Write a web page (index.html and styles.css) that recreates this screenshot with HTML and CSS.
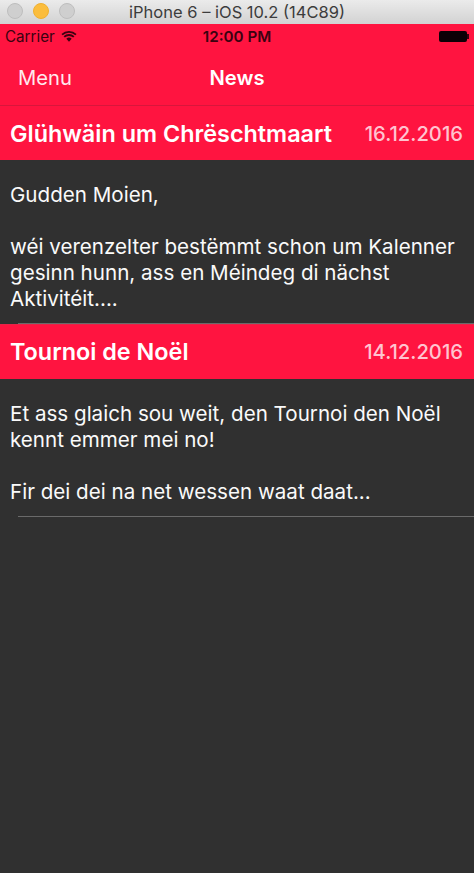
FILE: index.html
```html
<!DOCTYPE html>
<html lang="lb">
<head>
<meta charset="utf-8">
<title>News</title>
<link rel="stylesheet" href="styles.css">
</head>
<body>
<div class="titlebar">
  <div class="lights"><span class="light"></span><span class="light amber"></span><span class="light"></span></div>
  <div class="window-title">iPhone 6 – iOS 10.2 (14C89)</div>
</div>
<header class="appbar">
  <div class="status">
    <div class="carrier">Carrier
      <svg class="wifi" width="16" height="12" viewBox="0 0 15 11"><path d="M7.5 11 5 8a3.6 3.6 0 0 1 5 0z" fill="#3a0210"/><path d="M1 4.2a9.4 9.4 0 0 1 13 0M3 6.4a6.4 6.4 0 0 1 9 0" fill="none" stroke="#3a0210" stroke-width="1.7"/></svg>
    </div>
    <div class="clock">12:00 PM</div>
    <div class="battery"><span class="battery-body"></span><span class="battery-tip"></span></div>
  </div>
  <nav class="nav">
    <span class="menu">Menu</span>
    <span class="nav-title">News</span>
  </nav>
</header>
<main>
  <article class="item">
    <div class="item-head"><h2>Glühwäin um Chrëschtmaart</h2><time>16.12.2016</time></div>
    <p class="body">Gudden Moien,<br><br>wéi verenzelter bestëmmt schon um Kalenner gesinn hunn, ass en Méindeg di nächst Aktivitéit....</p>
  </article>
  <article class="item second">
    <div class="item-head"><h2>Tournoi de Noël</h2><time>14.12.2016</time></div>
    <p class="body">Et ass glaich sou weit, den Tournoi den Noël kennt emmer mei no!<br><br>Fir dei dei na net wessen waat daat...</p>
  </article>
</main>
</body>
</html>
```
FILE: styles.css
```css
* { box-sizing: border-box; }
html, body { margin: 0; height: 100%; }
body { width: 474px; height: 873px; overflow: hidden; background: #303030; font-family: Inter, "Liberation Sans", sans-serif; color: #fff; display: flex; flex-direction: column; }
.titlebar { height: 24px; flex: none; position: relative; display: flex; align-items: center; justify-content: center; background: linear-gradient(#ebebeb, #d2d2d2); color: #3c3c3c; font-size: 16.5px; }
.lights { position: absolute; left: 7px; top: 3px; display: flex; gap: 10px; }
.light { width: 16px; height: 16px; border-radius: 50%; background: #cfcfcf; border: 1px solid #bebebe; }
.light.amber { background: #fbbd3d; border-color: #f0b030; }
.window-title { white-space: nowrap; }
.appbar { height: 82px; flex: none; background: #ff1440; border-bottom: 1px solid #d8163c; }
.status { height: 24px; padding: 0 5px 0 5px; display: grid; grid-template-columns: 1fr auto 1fr; align-items: center; color: #3a0210; font-size: 15.2px; }
.carrier { display: flex; align-items: center; gap: 6px; }
.clock { font-weight: 600; }
.battery { justify-self: end; display: flex; align-items: center; }
.battery-body { width: 28px; height: 11px; background: #0c0006; border-radius: 2px; }
.battery-tip { width: 2px; height: 5px; background: #3a0210; }
.nav { height: 57px; padding-top: 2px; position: relative; display: flex; align-items: center; justify-content: center; font-size: 20.2px; }
.menu { position: absolute; left: 18px; color: #ffe9ee; }
.nav-title { font-weight: 600; }
.item-head { height: 54px; background: #ff1440; display: flex; align-items: center; justify-content: space-between; padding: 0 11px 0 10px; }
.second .item-head { height: 55px; border-top: 1px solid #e82347; padding-bottom: 2px; }
h2 { margin: 0; font-size: 23.4px; font-weight: 600; white-space: nowrap; }
time { font-size: 20.2px; font-weight: 500; color: #ffc4d0; }
.body { position: relative; margin: 0; padding: 22px 10px 0; font-size: 20.6px; line-height: 26px; height: 164px; color: #fafafa; }
.second .body { height: 138px; }
.body::after { content: ""; position: absolute; left: 18px; right: 0; bottom: 0; height: 1px; background: #6a6a6a; }
```
